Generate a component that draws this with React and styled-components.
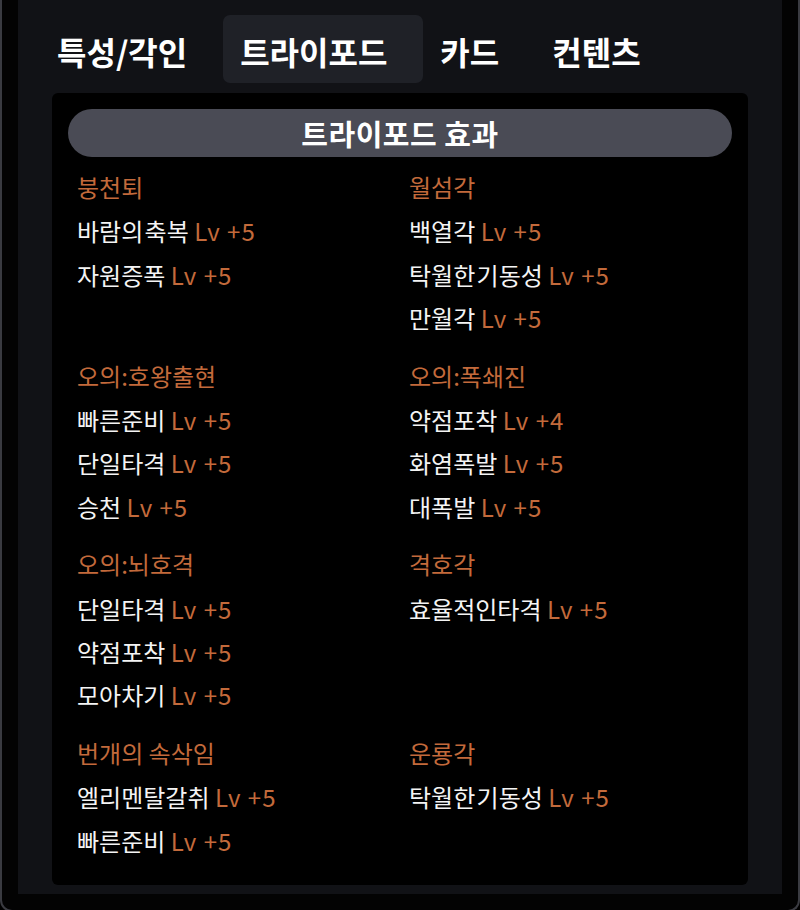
import React from "react";
import styled, { createGlobalStyle } from "styled-components";

const GlobalStyle = createGlobalStyle`
  html, body {
    margin: 0;
    padding: 0;
    background: #000;
  }
  body {
    font-family: "Noto Sans CJK KR", "Noto Sans", sans-serif;
    color: #fff;
  }
`;

const tabs = ["특성/각인", "트라이포드", "카드", "컨텐츠"];

const rows = [
  [
    { name: "붕천퇴", items: [["바람의 축복", 5], ["자원증폭", 5]] },
    { name: "월섬각", items: [["백열각", 5], ["탁월한 기동성", 5], ["만월각", 5]] },
  ],
  [
    { name: "오의:호왕출현", items: [["빠른준비", 5], ["단일타격", 5], ["승천", 5]] },
    { name: "오의:폭쇄진", items: [["약점포착", 4], ["화염폭발", 5], ["대폭발", 5]] },
  ],
  [
    { name: "오의:뇌호격", items: [["단일타격", 5], ["약점포착", 5], ["모아차기", 5]] },
    { name: "격호각", items: [["효율적인타격", 5]] },
  ],
  [
    { name: "번개의 속삭임", items: [["엘리멘탈갈취", 5], ["빠른준비", 5]] },
    { name: "운룡각", items: [["탁월한 기동성", 5]] },
  ],
];

export default function App() {
  return (
    <>
      <GlobalStyle />
      <Frame>
        <Panel>
          <TabBar>
            {tabs.map((t) => (
              <Tab key={t} $active={t === "트라이포드"}>
                {t}
              </Tab>
            ))}
          </TabBar>
          <Content>
            <Pill>트라이포드 효과</Pill>
            <Grid>
              {rows.flat().map((g, i) => (
                <Group key={i}>
                  <Title>{g.name}</Title>
                  {g.items.map(([label, lv], j) => (
                    <Item key={j}>
                      <Label>{label}</Label> <Level>Lv +{lv}</Level>
                    </Item>
                  ))}
                </Group>
              ))}
            </Grid>
          </Content>
        </Panel>
      </Frame>
    </>
  );
}

const Frame = styled.div`
  box-sizing: border-box;
  width: 800px;
  height: 912px;
  padding: 0 16px 16px;
  border: 2px solid #3a3b41;
  border-top: none;
  border-radius: 0 0 12px 12px;
  background: #030303;
`;

const Panel = styled.div`
  height: 100%;
  box-sizing: border-box;
  padding: 15px 0 9px;
  background: #111216;
  display: flex;
  flex-direction: column;
`;

const TabBar = styled.div`
  display: flex;
  padding-left: 22px;
  margin-bottom: 10px;
`;

const Tab = styled.div`
  box-sizing: border-box;
  height: 68px;
  display: flex;
  align-items: center;
  padding: 4px 36px 0 17px;
  border-radius: 7px;
  background: ${(p) => (p.$active ? "#1f2127" : "transparent")};
  font-size: 32px;
  font-weight: 700;
  color: #fff;
`;

const Content = styled.div`
  flex: 1;
  margin: 0 34px;
  padding: 16px 16px 0;
  background: #000;
  border-radius: 6px;
`;

const Pill = styled.div`
  height: 48px;
  border-radius: 24px;
  background: #4a4b55;
  display: flex;
  align-items: center;
  justify-content: center;
  font-size: 29px;
  font-weight: 700;
  letter-spacing: 0.5px;
  color: #fff;
  margin-bottom: 8px;
`;

const Grid = styled.div`
  display: grid;
  grid-template-columns: 1fr 1fr;
  row-gap: 14.5px;
`;

const Group = styled.div`
  padding-left: 9px;
  font-size: 24px;
  line-height: 43.3px;
`;

const Title = styled.div`
  color: #c36a3b;
  margin-bottom: 1px;
`;

const Item = styled.div`
  color: #f4f4f4;
  white-space: nowrap;
`;

const Label = styled.span`
  word-spacing: -4px;
`;

const Level = styled.span`
  color: #c36a3b;
  letter-spacing: 1px;
`;
